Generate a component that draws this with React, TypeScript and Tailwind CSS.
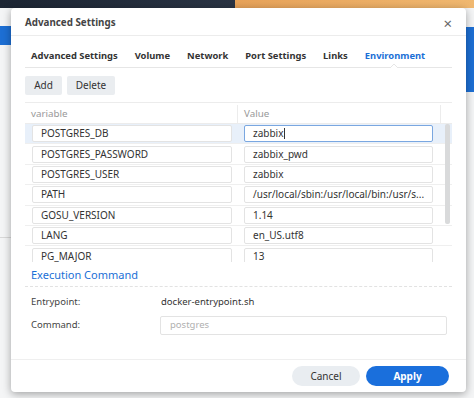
import React from "react";

const envRows = [
  { name: "POSTGRES_DB", value: "zabbix", active: true },
  { name: "POSTGRES_PASSWORD", value: "zabbix_pwd" },
  { name: "POSTGRES_USER", value: "zabbix" },
  { name: "PATH", value: "/usr/local/sbin:/usr/local/bin:/usr/s..." },
  { name: "GOSU_VERSION", value: "1.14" },
  { name: "LANG", value: "en_US.utf8" },
  { name: "PG_MAJOR", value: "13" },
];

const tabs = ["Advanced Settings", "Volume", "Network", "Port Settings", "Links", "Environment"];

export default function App() {
  return (
    <div
      className="relative h-[398px] w-[474px] overflow-hidden bg-[#f4f5f6] text-[#333]"
      style={{ fontFamily: '"Noto Sans", "DejaVu Sans", sans-serif' }}
    >
      {/* backdrop */}
      <div className="flex h-[8px] w-full">
        <div className="w-[235px] bg-gradient-to-r from-[#1d2634] to-[#2a3444]" />
        <div className="flex-1 bg-gradient-to-r from-[#e7a259] to-[#f0b870]" />
      </div>
      <div className="absolute left-0 top-[26px] h-[19px] w-[14px] bg-[#1d6fd4]" />
      <div className="absolute right-0 top-[27px] h-[65px] w-[12px] bg-[#1d6fd4]" />
      <div className="absolute left-0 top-[237px] h-px w-[14px] bg-[#d8d8d8]" />

      {/* dialog */}
      <div className="absolute left-[11px] top-[8px] flex h-[384px] w-[455px] flex-col rounded-[4px] bg-white shadow-[0_2px_8px_rgba(0,0,0,0.35)]">
        <div className="flex h-[28px] items-center justify-between border-b border-[#ececec] px-[14px] pt-[3px]">
          <span className="text-[9.8px] font-bold text-[#444]">Advanced Settings</span>
          <span className="text-[15px] leading-none text-[#666]">×</span>
        </div>

        <div className="px-[14px]">
          <div className="relative flex h-[32px] items-center gap-[17px] border-b border-[#e6e6e6] px-[6px] pt-[9px]">
            {tabs.map((t) => (
              <span
                key={t}
                className={
                  "text-[9.4px] font-bold " +
                  (t === "Environment" ? "text-[#1a6fd6]" : "text-[#333]")
                }
              >
                {t}
              </span>
            ))}
            <div className="absolute bottom-[-1px] left-[365px] h-[5px] w-[8px] bg-white">
              <svg width="8" height="5" viewBox="0 0 8 5">
                <path d="M0 5 L4 1 L8 5" fill="white" stroke="#e6e6e6" strokeWidth="1" />
              </svg>
            </div>
          </div>

          <div className="flex gap-[5px] pt-[8px]">
            <button className="h-[19px] w-[37px] rounded-[2px] bg-[#eaedf0] text-[10px] text-[#333]">Add</button>
            <button className="h-[19px] w-[48px] rounded-[2px] bg-[#eaedf0] text-[10px] text-[#333]">Delete</button>
          </div>

          {/* table */}
          <div className="mt-[7px] border-t border-[#ececec]">
            <div className="flex h-[21px] border-b border-[#ececec] pt-[2px] text-[9.8px] text-[#999]">
              <div className="flex w-[213px] items-center border-r border-[#ececec] pl-[6px]">variable</div>
              <div className="flex w-[203px] items-center border-r border-[#ececec] pl-[6px]">Value</div>
              <div className="flex-1" />
            </div>
            <div className="relative h-[138px] overflow-hidden">
              {envRows.map((r) => (
                <div
                  key={r.name}
                  className={
                    "flex h-[20.4px] items-center border-b border-[#efefef] " +
                    (r.active ? "bg-[#e8f0fa]" : "")
                  }
                >
                  <div className="flex w-[416px] items-center">
                    <div className="ml-[7px] flex h-[17px] w-[200px] items-center rounded-[2px] border border-[#e3e3e3] bg-white pl-[8px] text-[10px] text-[#333]">
                      {r.name}
                    </div>
                    <div
                      className={
                        "ml-[12px] flex h-[17px] w-[189px] items-center rounded-[2px] border bg-white pl-[8px] text-[10px] text-[#333] " +
                        (r.active ? "border-[#7aa7e0]" : "border-[#e3e3e3]")
                      }
                    >
                      {r.value}
                      {r.active && <span className="ml-px h-[11px] w-px bg-[#333]" />}
                    </div>
                  </div>
                </div>
              ))}
              <div className="absolute left-[420px] top-0 h-[100px] w-[5px] rounded-[2px] bg-[#d9dadb]" />
            </div>
          </div>

          {/* execution command */}
          <div className="flex h-[25px] items-center border-b border-dashed border-[#e2e2e2] pl-[6px] pt-[2px] text-[11px] text-[#1a6fd6]">
            Execution Command
          </div>
          <div className="flex h-[26px] items-center pl-[6px] pt-[5px] text-[9.5px]">
            <span className="w-[130px] text-[#444]">Entrypoint:</span>
            <span className="text-[#333]">docker-entrypoint.sh</span>
          </div>
          <div className="flex h-[24px] items-center pl-[6px] text-[9.5px]">
            <span className="w-[129px] text-[#444]">Command:</span>
            <div className="flex h-[19px] w-[287px] items-center rounded-[2px] border border-[#e3e3e3] pl-[9px] text-[#b0b0b0]">
              postgres
            </div>
          </div>
        </div>

        <div className="mt-auto flex h-[33px] items-center justify-end gap-[6px] border-t border-[#efefef] pr-[17px]">
          <button className="h-[20px] w-[68px] rounded-full bg-[#e9edf1] text-[10px] text-[#333]">Cancel</button>
          <button className="h-[20px] w-[83px] rounded-full bg-[#1a6fdc] text-[10px] font-bold text-white">Apply</button>
        </div>
      </div>
    </div>
  );
}
